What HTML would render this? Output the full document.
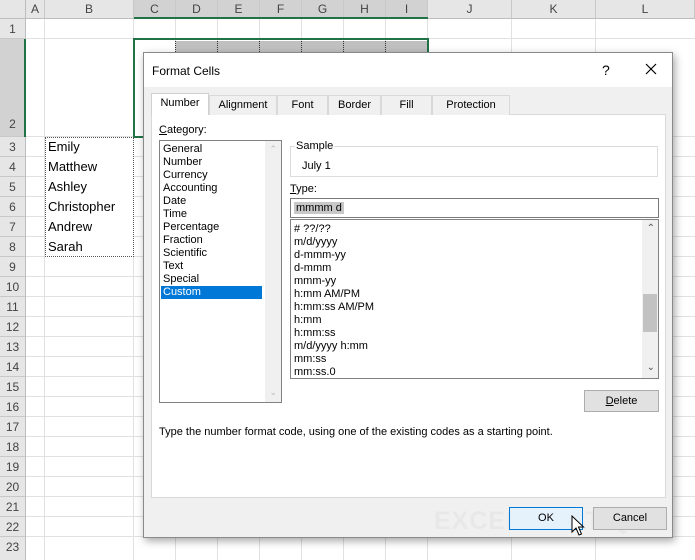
<!DOCTYPE html>
<html><head><style>
*{box-sizing:border-box;margin:0;padding:0}
body{width:695px;height:560px;overflow:hidden;background:#fff;font-family:"Liberation Sans",sans-serif;position:relative}
.a{position:absolute}
.ch{top:0;height:19px;background:#e6e6e6;border-right:1px solid #c8c8c8;border-bottom:1px solid #bdbdbd;font-size:12px;color:#444;text-align:center;line-height:19px}
.rh{left:0;width:26px;background:#e6e6e6;border-bottom:1px solid #c8c8c8;border-right:1px solid #bdbdbd;font-size:12px;color:#444;text-align:center}
.vl{top:19px;width:1px;height:541px;background:#e1e1e1}
.hl{left:26px;height:1px;width:669px;background:#e1e1e1}
.nm{left:48px;font-size:13px;color:#000}
.dlg{left:143px;top:52px;width:530px;height:486px;background:#f0f0f0;border:1px solid #8a8a8a;box-shadow:2px 3px 8px rgba(0,0,0,.35)}
.f{font-size:11px;color:#000}
.tab{top:42px;height:20px;border:1px solid #d9d9d9;border-bottom:none;background:#f0f0f0;font-size:11px;text-align:center;line-height:19px}
.li{font-size:11px;line-height:13px}
.dv{top:41px;width:0;height:95px;border-left:1px dotted #333}
</style></head><body>
<div class="a" style="left:0;top:0;width:26px;height:19px;background:#e6e6e6;border-right:1px solid #bdbdbd;border-bottom:1px solid #bdbdbd"></div>
<div class="a ch" style="left:26px;width:19px">A</div>
<div class="a ch" style="left:45px;width:89px">B</div>
<div class="a ch" style="left:134px;width:42px;background:#d2d2d2">C</div>
<div class="a ch" style="left:176px;width:42px;background:#d2d2d2">D</div>
<div class="a ch" style="left:218px;width:42px;background:#d2d2d2">E</div>
<div class="a ch" style="left:260px;width:42px;background:#d2d2d2">F</div>
<div class="a ch" style="left:302px;width:42px;background:#d2d2d2">G</div>
<div class="a ch" style="left:344px;width:42px;background:#d2d2d2">H</div>
<div class="a ch" style="left:386px;width:42px;background:#d2d2d2">I</div>
<div class="a ch" style="left:428px;width:84px">J</div>
<div class="a ch" style="left:512px;width:84px">K</div>
<div class="a ch" style="left:596px;width:99px">L</div>
<div class="a" style="left:134px;top:17px;width:294px;height:2px;background:#217346"></div>
<div class="a rh" style="top:19px;height:20px;line-height:20px">1</div>
<div class="a rh" style="top:39px;height:98px;line-height:170px;background:#d2d2d2">2</div>
<div class="a" style="left:24px;top:39px;width:2px;height:98px;background:#217346"></div>
<div class="a rh" style="top:137px;height:20px;line-height:20px">3</div>
<div class="a rh" style="top:157px;height:20px;line-height:20px">4</div>
<div class="a rh" style="top:177px;height:20px;line-height:20px">5</div>
<div class="a rh" style="top:197px;height:20px;line-height:20px">6</div>
<div class="a rh" style="top:217px;height:20px;line-height:20px">7</div>
<div class="a rh" style="top:237px;height:20px;line-height:20px">8</div>
<div class="a rh" style="top:257px;height:20px;line-height:20px">9</div>
<div class="a rh" style="top:277px;height:20px;line-height:20px">10</div>
<div class="a rh" style="top:297px;height:20px;line-height:20px">11</div>
<div class="a rh" style="top:317px;height:20px;line-height:20px">12</div>
<div class="a rh" style="top:337px;height:20px;line-height:20px">13</div>
<div class="a rh" style="top:357px;height:20px;line-height:20px">14</div>
<div class="a rh" style="top:377px;height:20px;line-height:20px">15</div>
<div class="a rh" style="top:397px;height:20px;line-height:20px">16</div>
<div class="a rh" style="top:417px;height:20px;line-height:20px">17</div>
<div class="a rh" style="top:437px;height:20px;line-height:20px">18</div>
<div class="a rh" style="top:457px;height:20px;line-height:20px">19</div>
<div class="a rh" style="top:477px;height:20px;line-height:20px">20</div>
<div class="a rh" style="top:497px;height:20px;line-height:20px">21</div>
<div class="a rh" style="top:517px;height:20px;line-height:20px">22</div>
<div class="a rh" style="top:537px;height:23px;line-height:20px;border-bottom:none">23</div>
<div class="a vl" style="left:44px"></div><div class="a vl" style="left:133px"></div><div class="a vl" style="left:175px"></div><div class="a vl" style="left:217px"></div><div class="a vl" style="left:259px"></div><div class="a vl" style="left:301px"></div><div class="a vl" style="left:343px"></div><div class="a vl" style="left:385px"></div><div class="a vl" style="left:427px"></div><div class="a vl" style="left:511px"></div><div class="a vl" style="left:595px"></div>
<div class="a hl" style="top:38px"></div><div class="a hl" style="top:136px"></div><div class="a hl" style="top:156px"></div><div class="a hl" style="top:176px"></div><div class="a hl" style="top:196px"></div><div class="a hl" style="top:216px"></div><div class="a hl" style="top:236px"></div><div class="a hl" style="top:256px"></div><div class="a hl" style="top:276px"></div><div class="a hl" style="top:296px"></div><div class="a hl" style="top:316px"></div><div class="a hl" style="top:336px"></div><div class="a hl" style="top:356px"></div><div class="a hl" style="top:376px"></div><div class="a hl" style="top:396px"></div><div class="a hl" style="top:416px"></div><div class="a hl" style="top:436px"></div><div class="a hl" style="top:456px"></div><div class="a hl" style="top:476px"></div><div class="a hl" style="top:496px"></div><div class="a hl" style="top:516px"></div><div class="a hl" style="top:536px"></div>
<div class="a" style="left:176px;top:41px;width:251px;height:95px;background:#c0c0c0"></div>
<div class="a dv" style="left:175px"></div><div class="a dv" style="left:217px"></div><div class="a dv" style="left:259px"></div><div class="a dv" style="left:301px"></div><div class="a dv" style="left:343px"></div><div class="a dv" style="left:385px"></div>
<div class="a" style="left:133px;top:38px;width:296px;height:100px;border:2px solid #217346"></div>
<div class="a" style="left:45px;top:137px;width:89px;height:120px;border:1px dotted #555;background:#fff"></div>
<div class="a nm" style="top:139px">Emily</div>
<div class="a nm" style="top:159px">Matthew</div>
<div class="a nm" style="top:179px">Ashley</div>
<div class="a nm" style="top:199px">Christopher</div>
<div class="a nm" style="top:219px">Andrew</div>
<div class="a nm" style="top:239px">Sarah</div>
<div class="a dlg">
 <div class="a" style="left:0;top:0;width:528px;height:34px;background:#fff"></div>
 <div class="a" style="left:8px;top:11px;font-size:12px">Format Cells</div>
 <div class="a" style="left:458px;top:9px;font-size:14px">?</div>
 <svg class="a" style="left:501px;top:10px" width="12" height="12"><path d="M1 1L11 11M11 1L1 11" stroke="#000" stroke-width="1.2"/></svg>
 <div class="a" style="left:7px;top:61px;width:515px;height:384px;background:#fff;border:1px solid #d9d9d9"></div>
 <div class="a tab" style="left:7px;top:40px;width:58px;height:22px;background:#fff;border-color:#d0d0d0">Number</div>
 <div class="a tab" style="left:65px;width:68px">Alignment</div>
 <div class="a tab" style="left:133px;width:51px">Font</div>
 <div class="a tab" style="left:184px;width:53px">Border</div>
 <div class="a tab" style="left:237px;width:51px">Fill</div>
 <div class="a tab" style="left:288px;width:78px">Protection</div>
 <div class="a f" style="left:15px;top:71px"><u>C</u>ategory:</div>
 <div class="a" style="left:15px;top:87px;width:123px;height:263px;border:1px solid #828282;background:#fff">
  <div class="a" style="right:0;top:0;width:16px;height:261px;background:#f0f0f0"></div>
  <div class="a" style="right:4px;top:3px;font-size:9px;color:#bbb">⌃</div>
  <div class="a" style="right:4px;top:246px;font-size:9px;color:#bbb">⌄</div>
  <div class="a li" style="left:3px;top:2px">General<br>Number<br>Currency<br>Accounting<br>Date<br>Time<br>Percentage<br>Fraction<br>Scientific<br>Text<br>Special</div>
  <div class="a li" style="left:1px;top:145px;width:101px;background:#0078d7;color:#fff;padding-left:2px">Custom</div>
 </div>
 <div class="a" style="left:146px;top:93px;width:368px;height:31px;border:1px solid #dcdcdc"></div>
 <div class="a f" style="left:151px;top:87px;background:#fff;padding:0 1px">Sample</div>
 <div class="a f" style="left:158px;top:107px">July 1</div>
 <div class="a f" style="left:146px;top:130px"><u>T</u>ype:</div>
 <div class="a" style="left:146px;top:145px;width:369px;height:20px;border:1px solid #7a7a7a;background:#fff"><span class="a f" style="left:3px;top:3px;background:#c8c8c8;padding:0 2px">mmmm d</span></div>
 <div class="a" style="left:146px;top:166px;width:369px;height:160px;border:1px solid #828282;background:#fff">
  <div class="a" style="right:0;top:0;width:16px;height:158px;background:#f0f0f0"></div>
  <div class="a" style="right:1px;top:74px;width:14px;height:38px;background:#c2c2c2"></div>
  <div class="a" style="right:3px;top:3px;font-size:10px;color:#555">⌃</div>
  <div class="a" style="right:3px;top:142px;font-size:10px;color:#555">⌄</div>
  <div class="a li" style="left:3px;top:3px">#&nbsp;??/??<br>m/d/yyyy<br>d-mmm-yy<br>d-mmm<br>mmm-yy<br>h:mm AM/PM<br>h:mm:ss AM/PM<br>h:mm<br>h:mm:ss<br>m/d/yyyy h:mm<br>mm:ss<br>mm:ss.0</div>
 </div>
 <div class="a f" style="left:440px;top:337px;width:75px;height:22px;border:1px solid #adadad;background:#e1e1e1;text-align:center;line-height:20px"><u>D</u>elete</div>
 <div class="a f" style="left:15px;top:373px">Type the number format code, using one of the existing codes as a starting point.</div>
 <div class="a" style="left:290px;top:454px;font-size:25px;color:#e8e8e8;font-weight:bold;letter-spacing:1px">EXCEL-PRATIQUE</div>
 <div class="a f" style="left:365px;top:454px;width:74px;height:23px;border:1px solid #0078d7;background:#e5f1fb;text-align:center;line-height:21px">OK</div>
 <div class="a f" style="left:449px;top:454px;width:74px;height:23px;border:1px solid #adadad;background:#e1e1e1;text-align:center;line-height:21px">Cancel</div>
 <svg class="a" style="left:427px;top:462px" width="14" height="22"><path d="M1 1L1 17L5 13L8 20L10.5 19L7.5 12L12.5 12Z" fill="#fff" stroke="#000" stroke-width="1"/></svg>
</div>
</body></html>
